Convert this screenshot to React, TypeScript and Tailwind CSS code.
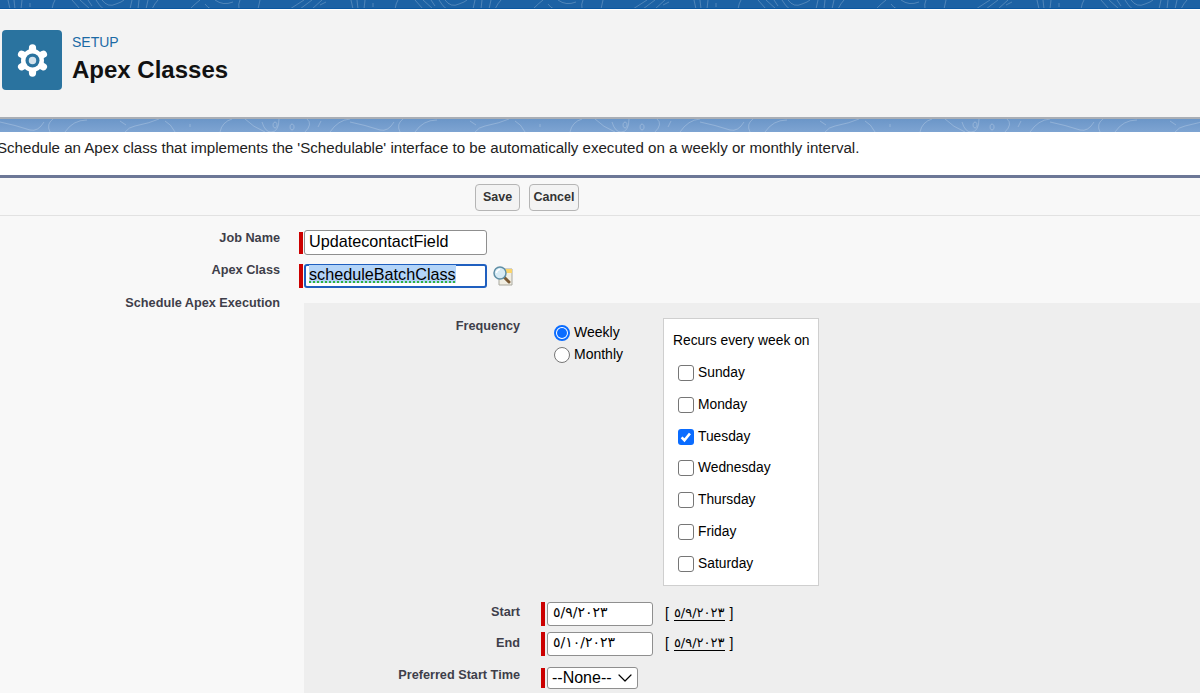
import { ChevronDown } from "lucide-react";

const days = [
  { name: "Sunday" },
  { name: "Monday" },
  { name: "Tuesday", checked: true },
  { name: "Wednesday" },
  { name: "Thursday" },
  { name: "Friday" },
  { name: "Saturday" },
];

// contour lines of the header bands, repeated along the width
function Waves({ id, w, h, d }: { id: string; w: number; h: number; d: string }) {
  return (
    <svg className="absolute inset-0 h-full w-full" fill="none">
      <defs>
        <pattern id={id} width={w} height={h} patternUnits="userSpaceOnUse">
          <path d={d} stroke="#ffffff" strokeOpacity="0.22" />
        </pattern>
      </defs>
      <rect width="100%" height="100%" fill={`url(#${id})`} />
    </svg>
  );
}

function Gear() {
  return (
    <svg viewBox="0 0 32 32" className="h-[35px] w-[35px]" fill="none">
      <g stroke="#fff" strokeWidth="6.6" strokeLinecap="round">
        <path d="M16 4.5v23M6 10.25l20 11.5M6 21.75l20-11.5" />
      </g>
      <circle cx="16" cy="16" r="10.5" fill="#fff" />
      <circle cx="16" cy="16" r="6.4" fill="#2a739f" />
      <circle cx="16" cy="16" r="3.4" fill="#d3e2ec" />
    </svg>
  );
}

function Lookup() {
  return (
    <svg viewBox="0 0 20 20" className="h-5 w-5">
      <path d="M6 3h13v16H6z" fill="#f1eee2" stroke="#a9a9a0" />
      <path d="M12 3h7v4h-7z" fill="#fbd469" />
      <path d="M11 11l5 5" stroke="#7a5a35" strokeWidth="3" strokeLinecap="round" />
      <circle cx="7" cy="7" r="6" fill="#d7ebf5" stroke="#5f8fa6" strokeWidth="1.5" />
      <path d="M3.5 7a3.5 3.5 0 0 1 3.5-3.5" stroke="#fff" strokeWidth="1.5" fill="none" />
    </svg>
  );
}

function Label({ children }: { children: string }) {
  return <div className="w-[280px] shrink-0 text-right text-[12.7px] leading-[18px] font-bold text-[#3e3e4a]">{children}</div>;
}

function DateRow({ label, value, labelClass }: { label: string; value: string; labelClass: string }) {
  return (
    <div className="flex h-[30px] items-start">
      <div className={`w-[216px] shrink-0 text-right text-[12.7px] leading-[16px] font-bold text-[#3e3e4a] ${labelClass}`}>{label}</div>
      <div className="ml-[21px] flex items-center">
        <div className="h-[24px] w-[4px] shrink-0 bg-[#c00]" />
        <div className="ml-[2px] h-[24px] w-[106px] rounded-[3px] border border-[#8f8f8f] bg-white pl-[5px] font-['DejaVu_Sans',sans-serif] text-[14px] leading-[18px] tracking-[1.5px] text-black">{value}</div>
      </div>
      <div className="ml-[12px] flex h-[22px] items-center gap-[5px] text-[14px] text-black">
        <span>[</span>
        <span className="border-b border-black font-['DejaVu_Sans',sans-serif] text-[13px] leading-[14px]">٥/٩/٢٠٢٣</span>
        <span>]</span>
      </div>
    </div>
  );
}

export default function App() {
  return (
    <div className="h-[693px] w-[1200px] overflow-hidden bg-[#f8f8f8] font-['Liberation_Sans',Arial,sans-serif]">
      <div className="relative h-[9px] overflow-hidden border-b border-[#0b57a0] bg-[#1d62a4]">
        <Waves
          id="top"
          w={343}
          h={9}
          d="M8 0l2 9M14 0l1 9M22 0l-1 9M30 3v4M52 9q1-6 3-9M72 0l8 9M80 0l10 9M88 0l4 6M96 0q8 14 16 9M102 0q6 8 14 4q6-2 8-4M130 9l2-9M138 9l1-9M146 9l2-9M152 9q3-6 6-9M190 9q6-6 10-9M205 4q3 4 6 5M215 0q8 6 18 2M240 0q-2 4-1 9M260 0l-2 9M290 9l14-9M300 9l12-9M312 9l10-9M320 5l6-3"
        />
      </div>
      <div className="h-px bg-white" />
      <div className="flex h-[107px] items-start bg-[#f3f3f3] pl-[2px] pt-[20px]">
        <div className="flex h-[60px] w-[60px] items-center justify-center rounded-[4px] bg-[#2a739f]">
          <Gear />
        </div>
        <div className="ml-[10px]">
          <div className="mt-[4px] text-[14px] leading-[17px] text-[#1b6aa5]">SETUP</div>
          <div className="mt-[4px] text-[24px] leading-[30px] font-bold text-[#111]">Apex Classes</div>
        </div>
      </div>
      <div className="h-[2px] bg-[#a9aeb5]" />
      <div className="relative h-[13px] overflow-hidden bg-gradient-to-b from-[#6b96c8] to-[#7ea4d2]">
        <Waves
          id="band"
          w={350}
          h={13}
          d="M0 3q15 3 30 8q8 2 14-8M50 13q-4-8 3-13M65 13q8-12 22-12M120 2l6 4M125 13q4-5 10-6q15-3 24-7M165 2q6 3 10 11M190 5v3M220 13q2-10 12-13M245 0q8 8 20 13M262 3q3 10 9 10q8 0 8-13M275 3a2 3 0 1 0 .1 0M292 5a2 3 0 1 0 .1 0M305 13q8-8 2-13M318 8l3-6M330 13q8-12 20-13"
        />
      </div>
      <div className="h-[43px] bg-white pt-[8px]">
        <p className="-ml-[3px] whitespace-nowrap text-[15.1px] leading-[16px] text-[#222]">
          Schedule an Apex class that implements the 'Schedulable' interface to be automatically executed on a weekly or monthly interval.
        </p>
      </div>
      <div className="h-[3px] bg-[#6c7796]" />

      <div className="flex h-[38px] items-center gap-[9px] border-b border-[#e2e2e2] pl-[475px] pt-[2px]">
        <button className="h-[27px] w-[45px] rounded-[4px] border border-[#b5b5b5] bg-[#f3f3f3] text-[12.5px] font-bold text-[#333]">Save</button>
        <button className="h-[27px] w-[50px] rounded-[4px] border border-[#b5b5b5] bg-[#f3f3f3] text-[12.5px] font-bold text-[#333]">Cancel</button>
      </div>

      <div className="flex h-[45px] items-start pt-[13px]">
        <Label>Job Name</Label>
        <div className="ml-[19px] mt-px flex items-center">
          <div className="h-[22px] w-[4px] shrink-0 bg-[#c00]" />
          <div className="ml-px h-[25px] w-[183px] rounded-[3px] border border-[#8f8f8f] bg-white pl-[4px] text-[16.2px] leading-[21px] text-black">UpdatecontactField</div>
        </div>
      </div>
      <div className="flex h-[33px] items-start">
        <Label>Apex Class</Label>
        <div className="ml-[19px] mt-[3px] flex items-center">
          <div className="h-[24px] w-[4px] shrink-0 bg-[#c00]" />
          <div className="ml-px h-[24px] w-[183px] rounded-[3px] border-2 border-[#1f5fbf] bg-white pl-[3px] text-[16.2px] leading-[16px] text-black">
            <span className="bg-[#b3d4f8] underline decoration-[#2fb344] decoration-dotted decoration-2 underline-offset-1">scheduleBatchClass</span>
          </div>
          <div className="ml-[6px]">
            <Lookup />
          </div>
        </div>
      </div>
      <div className="flex items-start">
        <Label>Schedule Apex Execution</Label>
        <div className="ml-[24px] mt-[9px] h-[400px] w-[896px] shrink-0 bg-[#eeeeee] pt-[15px]">
          <div className="flex h-[284px] items-start">
            <div className="w-[216px] shrink-0 text-right text-[12.7px] leading-[16px] font-bold text-[#3e3e4a]">Frequency</div>
            <div className="ml-[34px] w-[109px] shrink-0 pt-[4px] text-[14px] text-black">
              <label className="flex h-[22px] items-center gap-[4px]">
                <span className="flex h-[16px] w-[16px] items-center justify-center rounded-full border-2 border-[#0a6cff] bg-white">
                  <span className="h-[10px] w-[10px] rounded-full bg-[#0a6cff]" />
                </span>
                <span className="-mt-[2px]">Weekly</span>
              </label>
              <label className="flex h-[22px] items-center gap-[4px]">
                <span className="h-[16px] w-[16px] rounded-full border border-[#767676] bg-white" />
                <span className="-mt-[2px]">Monthly</span>
              </label>
            </div>
            <div className="h-[268px] w-[156px] shrink-0 border border-[#cfcfcf] bg-white pl-[9px] pt-[14px] text-[13.8px] leading-[16px] text-black">
              <div className="whitespace-nowrap">Recurs every week on</div>
              <div className="mt-[8px]">
                {days.map((d) => (
                  <div key={d.name} className="flex h-[31.85px] items-center gap-[4px] pl-[5px]">
                    {d.checked ? (
                      <span className="flex h-[16px] w-[16px] items-center justify-center rounded-[3px] bg-[#0a6cff]">
                        <svg viewBox="0 0 16 16" className="h-[14px] w-[14px]" fill="none" stroke="#fff" strokeWidth="3">
                          <path d="M3 8.5l3.2 3.2 6.3-7.7" />
                        </svg>
                      </span>
                    ) : (
                      <span className="h-[16px] w-[16px] rounded-[3px] border border-[#767676] bg-white" />
                    )}
                    {d.name}
                  </div>
                ))}
              </div>
            </div>
          </div>
          <DateRow label="Start" value="٥/٩/٢٠٢٣" labelClass="pt-[2px]" />
          <DateRow label="End" value="٥/١٠/٢٠٢٣" labelClass="pt-[3px]" />
          <div className="flex items-start pt-[4px]">
            <div className="mt-px w-[216px] shrink-0 text-right text-[12.7px] leading-[16px] font-bold text-[#3e3e4a]">Preferred Start Time</div>
            <div className="ml-[21px] mt-px flex items-center">
              <div className="h-[20px] w-[4px] shrink-0 bg-[#c00]" />
              <div className="ml-[2px] flex h-[22px] w-[91px] items-center justify-between rounded-[3px] border border-[#8f8f8f] bg-white pl-[4px] text-[16px] text-black">
                --None--
                <ChevronDown size={24} strokeWidth={1.2} />
              </div>
            </div>
          </div>
        </div>
      </div>
    </div>
  );
}
